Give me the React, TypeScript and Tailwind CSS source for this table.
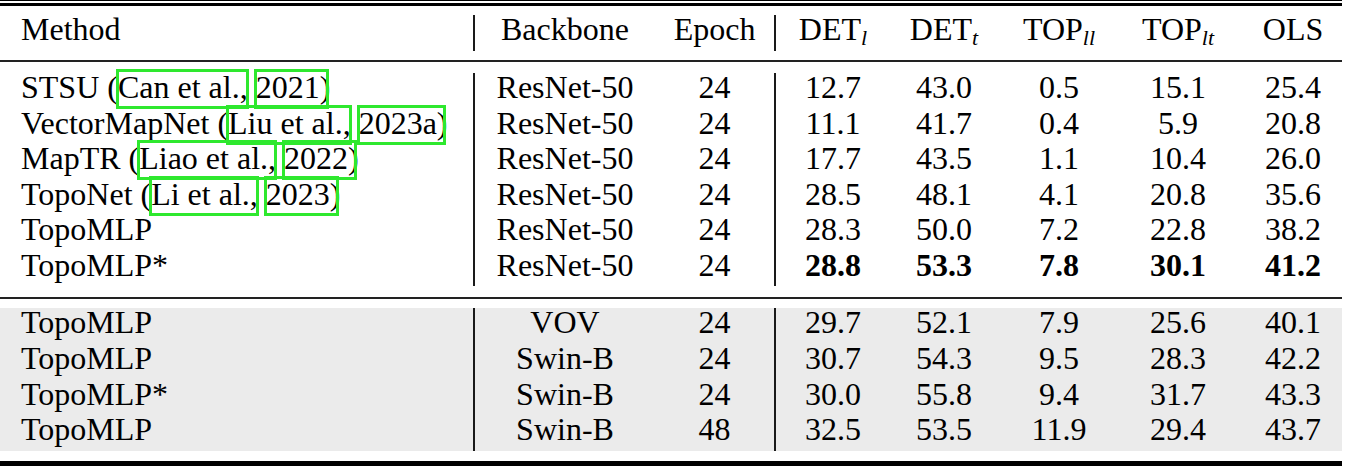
import React from 'react';

// Citation link, drawn the way hyperref boxes them in the PDF
const Cite: React.FC<{ children: React.ReactNode }> = ({ children }) => (
  <span className="relative">
    {children}
    <span className="absolute -left-[2px] -right-[9px] top-0 -bottom-[4px] border-[3px] border-[#2ee82e]" />
  </span>
);

const Sub: React.FC<{ children: React.ReactNode }> = ({ children }) => (
  <span className="text-[22px] italic leading-none align-[-5px]">{children}</span>
);

interface Result {
  method: React.ReactNode;
  backbone: string;
  epoch: number;
  scores: string[];
  bold?: boolean;
}

const mainRows: Result[] = [
  {
    method: (
      <>
        STSU (<Cite>Can et al.</Cite>, <Cite>2021</Cite>)
      </>
    ),
    backbone: 'ResNet-50',
    epoch: 24,
    scores: ['12.7', '43.0', '0.5', '15.1', '25.4'],
  },
  {
    method: (
      <>
        VectorMapNet (<Cite>Liu et al.</Cite>, <Cite>2023a</Cite>)
      </>
    ),
    backbone: 'ResNet-50',
    epoch: 24,
    scores: ['11.1', '41.7', '0.4', '5.9', '20.8'],
  },
  {
    method: (
      <>
        MapTR (<Cite>Liao et al.</Cite>, <Cite>2022</Cite>)
      </>
    ),
    backbone: 'ResNet-50',
    epoch: 24,
    scores: ['17.7', '43.5', '1.1', '10.4', '26.0'],
  },
  {
    method: (
      <>
        TopoNet (<Cite>Li et al.</Cite>, <Cite>2023</Cite>)
      </>
    ),
    backbone: 'ResNet-50',
    epoch: 24,
    scores: ['28.5', '48.1', '4.1', '20.8', '35.6'],
  },
  { method: 'TopoMLP', backbone: 'ResNet-50', epoch: 24, scores: ['28.3', '50.0', '7.2', '22.8', '38.2'] },
  { method: 'TopoMLP*', backbone: 'ResNet-50', epoch: 24, scores: ['28.8', '53.3', '7.8', '30.1', '41.2'], bold: true },
];

const extraRows: Result[] = [
  { method: 'TopoMLP', backbone: 'VOV', epoch: 24, scores: ['29.7', '52.1', '7.9', '25.6', '40.1'] },
  { method: 'TopoMLP', backbone: 'Swin-B', epoch: 24, scores: ['30.7', '54.3', '9.5', '28.3', '42.2'] },
  { method: 'TopoMLP*', backbone: 'Swin-B', epoch: 24, scores: ['30.0', '55.8', '9.4', '31.7', '43.3'] },
  { method: 'TopoMLP', backbone: 'Swin-B', epoch: 48, scores: ['32.5', '53.5', '11.9', '29.4', '43.7'] },
];

const scoreCols = ['w-[114px]', 'w-[108px]', 'w-[122px]', 'w-[116px]', 'w-[106px] pl-[8px]'];

const Row: React.FC<{ r: Result; height: string }> = ({ r, height }) => (
  <div className={`flex ${height}`}>
    <div className="w-[475px] pl-[21px] border-r-2 border-[#1a1a1a] leading-[28.5px] whitespace-nowrap">{r.method}</div>
    <div className="w-[180px] text-center leading-[28.5px]">{r.backbone}</div>
    <div className="w-[121px] text-center border-r-2 border-[#1a1a1a] leading-[28.5px]">{r.epoch}</div>
    {r.scores.map((s, i) => (
      <div key={i} className={`${scoreCols[i]} text-center leading-[28.5px] ${r.bold ? 'font-bold' : ''}`}>
        {s}
      </div>
    ))}
  </div>
);

export default function App() {
  return (
    <div className="w-[1346px] h-[468px] bg-white text-black text-[32px] font-['Liberation_Serif',serif]">
      <div className="w-[1342px]">
        <div className="h-[1px] bg-black" />
        <div className="h-[2px]" />
        <div className="h-[3px] bg-black" />

        {/* header */}
        <div className="pt-[9px] pb-[9.5px]">
          <div className="flex h-[35.5px]">
            <div className="w-[475px] pl-[21px] border-r-2 border-[#1a1a1a] leading-[28.5px]">Method</div>
            <div className="w-[180px] text-center leading-[28.5px]">Backbone</div>
            <div className="w-[121px] text-center border-r-2 border-[#1a1a1a] leading-[28.5px]">Epoch</div>
            <div className="w-[114px] text-center leading-[28.5px]">
              DET<Sub>l</Sub>
            </div>
            <div className="w-[108px] text-center leading-[28.5px]">
              DET<Sub>t</Sub>
            </div>
            <div className="w-[122px] text-center leading-[28.5px]">
              TOP<Sub>ll</Sub>
            </div>
            <div className="w-[116px] text-center leading-[28.5px]">
              TOP<Sub>lt</Sub>
            </div>
            <div className="w-[106px] pl-[8px] text-center leading-[28.5px]">OLS</div>
          </div>
        </div>
        <div className="h-[2px] bg-[#222]" />

        {/* ResNet-50 comparison */}
        <div className="py-[11px]">
          {mainRows.map((r, i) => (
            <Row key={i} r={r} height="h-[35.5px]" />
          ))}
        </div>
        <div className="h-[2px] bg-[#222]" />

        {/* larger backbones */}
        <div className="pt-[9px] pb-[10px]">
          <div className="bg-[#ebebeb]">
            {extraRows.map((r, i) => (
              <Row key={i} r={r} height="h-[35.75px]" />
            ))}
          </div>
        </div>
        <div className="h-[5px] bg-black" />
      </div>
    </div>
  );
}
